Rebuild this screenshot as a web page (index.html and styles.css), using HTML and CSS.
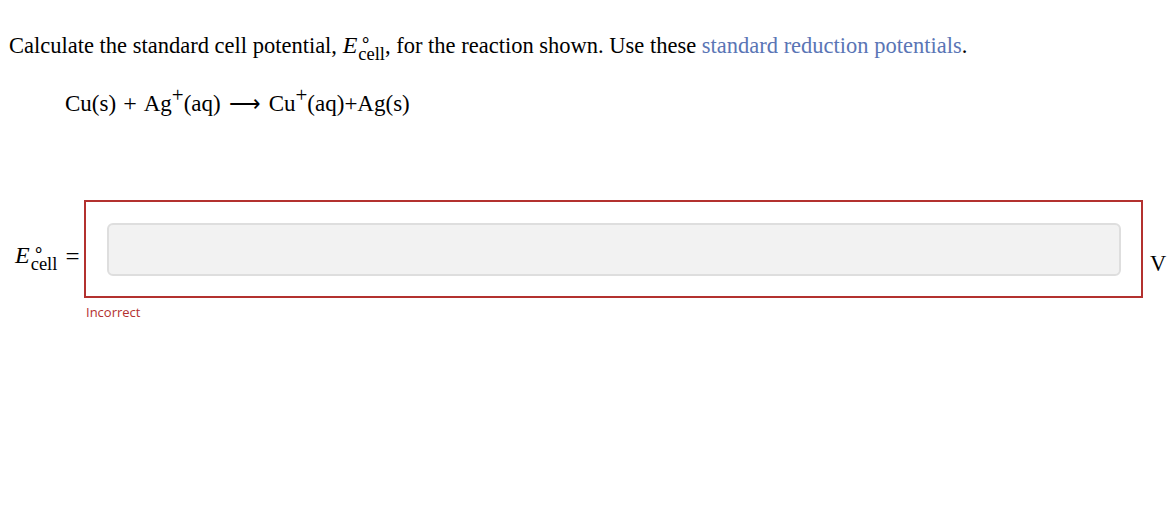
FILE: index.html
```html
<!DOCTYPE html>
<html>
<head>
<meta charset="utf-8">
<link rel="stylesheet" href="styles.css">
</head>
<body>
<div class="page">
  <p class="question">Calculate the standard cell potential, <span class="ecell"><i class="evar">E</i><span class="scripts"><span class="deg">&#8728;</span><span class="sub">cell</span></span></span>, for the reaction shown. Use these <a class="link" href="#">standard reduction potentials</a>.</p>
  <div class="equation">Cu(s)<span class="op">+</span>Ag<sup class="charge">+</sup>(aq)<span class="arrow">&#10230;</span>Cu<sup class="charge">+</sup>(aq)+Ag(s)</div>
  <div class="answer-row">
    <div class="label"><span class="ecell"><i class="evar">E</i><span class="scripts"><span class="deg">&#8728;</span><span class="sub">cell</span></span></span><span class="eq">=</span></div>
    <div class="answer-col">
      <div class="box"><div class="input"></div></div>
      <div class="feedback">Incorrect</div>
    </div>
    <div class="unit">V</div>
  </div>
</div>
</body>
</html>
```
FILE: styles.css
```css
html, body { margin: 0; padding: 0; background: #fff; }
body { font-family: "Liberation Serif", "Times New Roman", serif; color: #000; }
.page { padding: 0 0 0 9px; }
.question { margin: 0; padding-top: 31px; font-size: 22.5px; line-height: 28px; }
.link { color: #5a75b5; text-decoration: none; }
.ecell { white-space: nowrap; }
.evar { font-style: italic; font-size: 24px; }
.scripts { display: inline-block; vertical-align: -7px; margin-left: 1px; }
.scripts .deg { display: block; font-size: 18px; line-height: 10px; height: 13px; padding-left: 2px; }
.scripts .sub { display: block; font-size: 18.5px; line-height: 14px; }
.equation { margin: 28px 0 0 56px; font-size: 23px; line-height: 28px; }
.equation .op { margin: 0 7px; font-size: 24px; }
.charge { font-size: 21px; line-height: 0; vertical-align: 9px; }
.arrow { display: inline-block; margin: 0 8px; font-size: 22px; }
.answer-row { display: flex; align-items: flex-start; margin-top: 82px; margin-left: 6px; }
.label { width: 69px; height: 98px; padding-top: 15px; box-sizing: border-box; display: flex; align-items: center; font-size: 22.5px; }
.label .eq { margin-left: 8px; font-size: 25px; }
.answer-col { display: flex; flex-direction: column; }
.box { width: 1055px; height: 94px; border: 2px solid #b3312f; display: flex; align-items: center; justify-content: center; }
.input { width: 1010px; height: 49px; background: #f2f2f2; border: 2px solid #dedede; border-radius: 6px; }
.feedback { margin: 5px 0 0 2px; font-family: "Open Sans", "Noto Sans", sans-serif; font-size: 13px; line-height: 18px; color: #b3312f; }
.unit { height: 98px; padding-top: 30px; box-sizing: border-box; display: flex; align-items: center; margin-left: 7px; font-size: 22.5px; }
```
